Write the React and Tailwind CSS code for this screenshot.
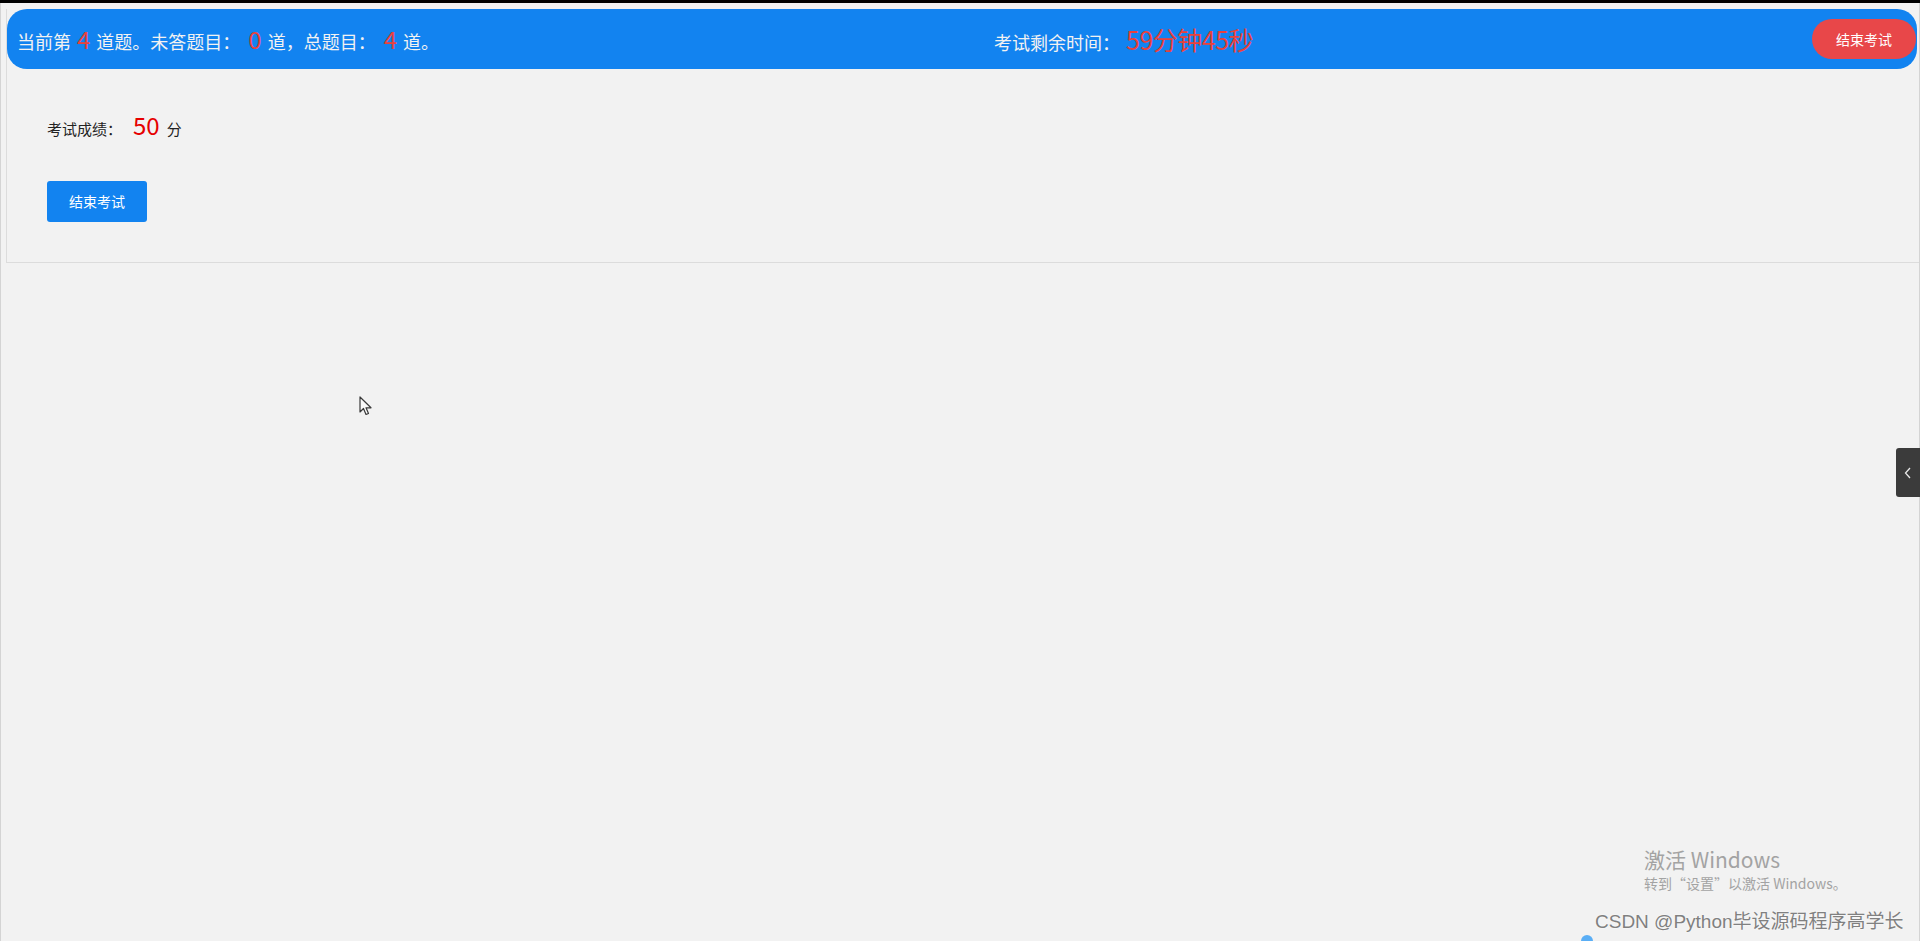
import React from 'react';

const cjk = { fontFamily: '"Noto Sans CJK SC", "Noto Sans", sans-serif' };

const Num = ({ children, className = '' }) => (
  <span className={`mx-[6px] text-[24px] leading-none text-[#e8413c] ${className}`}>{children}</span>
);

const Header = () => (
  <div className="mr-[2px] flex h-[60px] items-center rounded-[20px] bg-[#1283f0] pl-[10px] pr-px text-[18px] text-[#f2f2f2]">
    {/* progress */}
    <div className="flex w-[977px] items-baseline leading-none">
      <span>当前第</span>
      <Num>4</Num>
      <span>道题。未答题目：</span>
      <Num className="ml-[8px]">0</Num>
      <span>道，总题目：</span>
      <Num className="ml-[8px]">4</Num>
      <span>道。</span>
    </div>

    {/* timer */}
    <div className="flex items-baseline leading-none">
      <span>考试剩余时间：</span>
      <span className="ml-[6px] text-[25px] tracking-[-0.5px] text-[#e8413c]">59分钟45秒</span>
    </div>

    <button className="ml-auto h-[40px] w-[104px] rounded-full bg-[#e84749] text-[14px] text-white">
      结束考试
    </button>
  </div>
);

const Cursor = () => (
  <svg className="absolute left-[359px] top-[396px]" width="14" height="21" viewBox="0 0 14 21">
    <path
      d="M1 1 L1 16 L4.5 12.5 L7 18.5 L9.5 17.5 L7 11.8 L12 11.8 Z"
      fill="#fafafa"
      stroke="#3a3a3a"
      strokeWidth="1.2"
      strokeLinejoin="round"
    />
  </svg>
);

export default function App() {
  return (
    <div className="relative h-[941px] w-full overflow-hidden bg-[#f2f2f2]" style={cjk}>
      <div className="h-[3px] bg-black" />

      <div className="flex h-[938px] border-x border-[#d4d4d4]">
        <div className="ml-[5px] mt-[6px] h-[254px] flex-1 border-b border-l border-[#dcdcdc]">
          <Header />

          <div className="pl-[40px] pt-[42px]">
            <div className="flex h-[28px] items-baseline leading-[28px] text-[#222]">
              <span className="text-[15px]">考试成绩：</span>
              <span className="ml-[11px] text-[24px] text-[#e60000]">50</span>
              <span className="ml-[7px] text-[15px]">分</span>
            </div>

            <button className="mt-[42px] h-[41px] w-[100px] rounded-[3px] bg-[#1283f0] text-[14px] text-white">
              结束考试
            </button>
          </div>
        </div>
      </div>

      {/* side toggle */}
      <div className="absolute right-0 top-[448px] flex h-[49px] w-[24px] items-center justify-center rounded-l-[3px] bg-[#3b3b3b]">
        <svg width="8" height="12" viewBox="0 0 8 12">
          <path d="M6 1 L1.5 6 L6 11" fill="none" stroke="#e8e8e8" strokeWidth="1.3" />
        </svg>
      </div>

      <Cursor />

      {/* windows activation watermark */}
      <div className="absolute left-[1644px] top-[846px] text-[#a3a3a3]">
        <div className="text-[21px] leading-[27px]">激活 Windows</div>
        <div className="text-[14px] leading-[20px]">转到“设置”以激活 Windows。</div>
      </div>

      <div
        className="absolute left-[1595px] top-[910px] text-[19px] leading-[24px] text-[#808080] [text-shadow:0_0_2px_#ffffff]"
        style={{ fontFamily: '"Liberation Sans", "Noto Sans CJK SC", sans-serif' }}
      >
        CSDN @Python毕设源码程序高学长
      </div>

      <div className="absolute left-[1581px] top-[935px] h-[12px] w-[12px] rounded-full bg-[#5aaef5]" />
    </div>
  );
}
